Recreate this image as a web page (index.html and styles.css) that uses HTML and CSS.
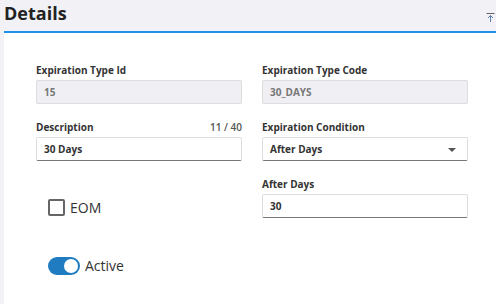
FILE: index.html
```html
<!DOCTYPE html>
<html lang="en">
<head>
    <meta charset="UTF-8">
    <meta name="viewport" content="width=device-width, initial-scale=1.0">
    <title>Details</title>
    <link rel="stylesheet" href="styles.css">
</head>
<body>
    <div class="page">
        <header class="panel-header">
            <h1>Details</h1>
            <button class="pin-btn" title="Collapse">
                <svg width="9" height="9" viewBox="0 0 9 9">
                    <path d="M0.5 0.5 H8.5" stroke="#666" stroke-width="1"/>
                    <path d="M4.5 2.5 V9 M2 5 L4.5 2.5 L7 5" stroke="#5a7fb0" stroke-width="1" fill="none"/>
                </svg>
            </button>
        </header>

        <main class="panel-body">
            <div class="form-grid">
                <div class="field">
                    <label class="field-label">Expiration Type Id</label>
                    <div class="input disabled">15</div>
                </div>
                <div class="field">
                    <label class="field-label">Expiration Type Code</label>
                    <div class="input disabled">30_DAYS</div>
                </div>

                <div class="field">
                    <label class="field-label">Description <span class="counter">11 / 40</span></label>
                    <div class="input">30 Days</div>
                </div>
                <div class="field">
                    <label class="field-label">Expiration Condition</label>
                    <div class="input select">After Days <span class="caret"></span></div>
                </div>

                <div class="check-cell">
                    <label class="checkbox"><span class="box"></span>EOM</label>
                </div>
                <div class="field">
                    <label class="field-label">After Days</label>
                    <div class="input">30</div>
                </div>

                <div class="toggle-cell">
                    <label class="toggle"><span class="switch"><span class="knob"></span></span>Active</label>
                </div>
            </div>
        </main>
    </div>
</body>
</html>
```

FILE: styles.css
```css
/* General */
body {
    margin: 0;
    font-family: 'Open Sans', sans-serif;
    background: #f1f1f6;
    color: #333;
    overflow: hidden;
}

.page {
    height: 304px;
    display: flex;
    flex-direction: column;
}

/* Header */
.panel-header {
    height: 31px;
    display: flex;
    justify-content: space-between;
    align-items: flex-start;
    padding: 0 0 0 4px;
}

.panel-header h1 {
    margin: 0;
    font-size: 18px;
    font-weight: 700;
    line-height: 27px;
    color: #222;
}

.pin-btn {
    border: none;
    background: none;
    padding: 0;
    margin: 13px 1px 0 0;
    line-height: 0;
}

/* Body */
.panel-body {
    flex: 1;
    margin-left: 4px;
    background: #fff;
    border-top: 2px solid #1e8fea;
    padding: 29px 28px 0 32px;
}

.form-grid {
    display: grid;
    grid-template-columns: 206px 206px;
    column-gap: 20px;
    row-gap: 15px;
}

.field-label {
    display: flex;
    justify-content: space-between;
    font-size: 10px;
    font-weight: 700;
    line-height: 16px;
    margin-bottom: 2px;
}

.counter {
    font-weight: 600;
    color: #555;
}

.input {
    height: 22px;
    border: 1px solid #ddd;
    border-bottom-color: #777;
    border-radius: 2px;
    padding: 0 7px;
    font-size: 10px;
    font-weight: 700;
    line-height: 22px;
    color: #333;
    position: relative;
}

.input.disabled {
    background: #f0f0f4;
    border-bottom-color: #ddd;
    color: #777;
}

.caret {
    position: absolute;
    right: 11px;
    top: 10px;
    border-left: 4px solid transparent;
    border-right: 4px solid transparent;
    border-top: 4px solid #555;
}

/* Checkbox and toggle */
.check-cell {
    padding: 22px 0 0 12px;
}

.checkbox, .toggle {
    display: flex;
    align-items: center;
    gap: 5px;
    font-size: 14px;
    color: #333;
}

.box {
    width: 13px;
    height: 13px;
    border: 2px solid #666;
    border-radius: 2px;
}

.toggle-cell {
    padding: 23px 0 0 12px;
}

.switch {
    width: 32px;
    height: 18px;
    border-radius: 9px;
    background: #1f7cc1;
    display: flex;
    align-items: center;
    justify-content: flex-end;
    padding: 0 2px;
    box-sizing: border-box;
}

.knob {
    width: 14px;
    height: 14px;
    border-radius: 50%;
    background: #fff;
}
```
